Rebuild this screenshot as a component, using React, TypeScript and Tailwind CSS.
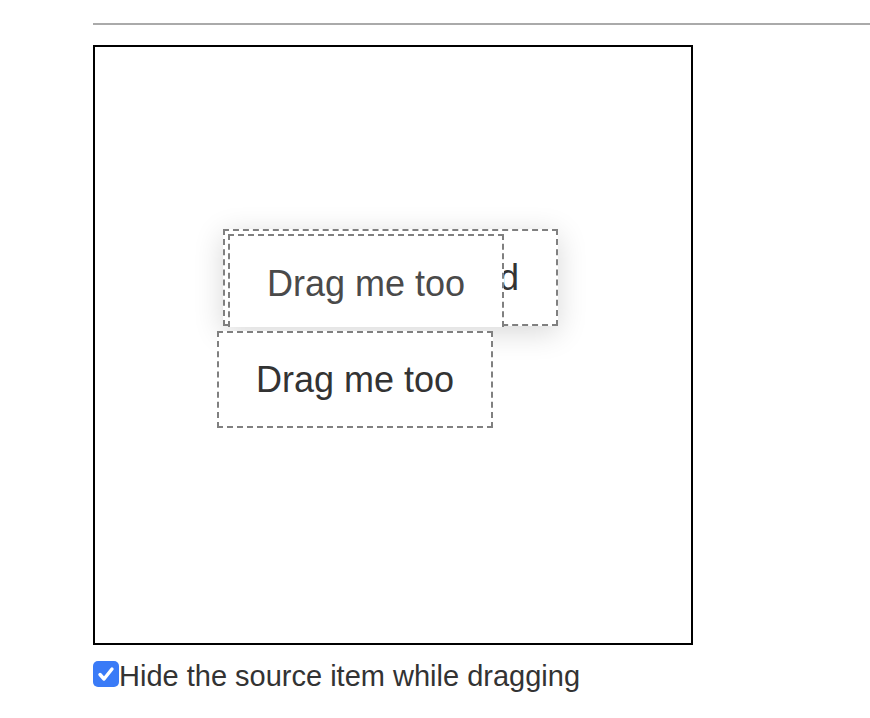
import React, { useState } from 'react'

const font = { fontFamily: '"Liberation Sans", Arial, Helvetica, sans-serif' }

export default function App() {
  const [hideSource, setHideSource] = useState(true)

  return (
    <div className="min-h-[718px] bg-white pl-[93px] pt-[23px] text-[#333]" style={font}>
      <hr className="border-0 h-[2px] bg-[#aaaaaa]" />

      {/* drop container */}
      <div className="relative mt-[20px] w-[600px] h-[600px] border-2 border-black">
        {/* source item (partly hidden under the preview) */}
        <div className="absolute left-[128px] top-[182px] w-[335px] h-[97px] flex items-center justify-end pr-[37px] border-2 border-dashed border-[#808080] bg-white text-[36px] shadow-[0_6px_28px_rgba(0,0,0,0.16)]">
          Drag me around
        </div>

        {/* drag preview */}
        <div className="absolute left-[133px] top-[187px] w-[276px] h-[93px] flex items-center justify-center border-2 border-b-0 border-dashed border-[#808080] bg-white text-[36px] text-[#4a4a4a] pt-[4px]">
          Drag me too
        </div>

        <div className="absolute left-[122px] top-[284px] w-[276px] h-[97px] flex items-center justify-center border-2 border-dashed border-[#808080] bg-white text-[36px]">
          Drag me too
        </div>
      </div>

      <label className="mt-[15px] flex items-start text-[29px] leading-[33px] cursor-pointer select-none">
        <input
          type="checkbox"
          className="sr-only"
          checked={hideSource}
          onChange={(e) => setHideSource(e.target.checked)}
        />
        <span
          className={
            hideSource
              ? 'mt-[1px] w-[26px] h-[26px] rounded-[5px] bg-[#3a7bf7] flex items-center justify-center'
              : 'mt-[1px] w-[26px] h-[26px] rounded-[5px] border-2 border-[#888] bg-white'
          }
        >
          {hideSource && (
            <svg width="20" height="20" viewBox="0 0 20 20" fill="none">
              <path d="M4 10.5l4 4.5 8-10" stroke="white" strokeWidth="3.4" strokeLinecap="round" strokeLinejoin="round" />
            </svg>
          )}
        </span>
        <span>Hide the source item while dragging</span>
      </label>
    </div>
  )
}
